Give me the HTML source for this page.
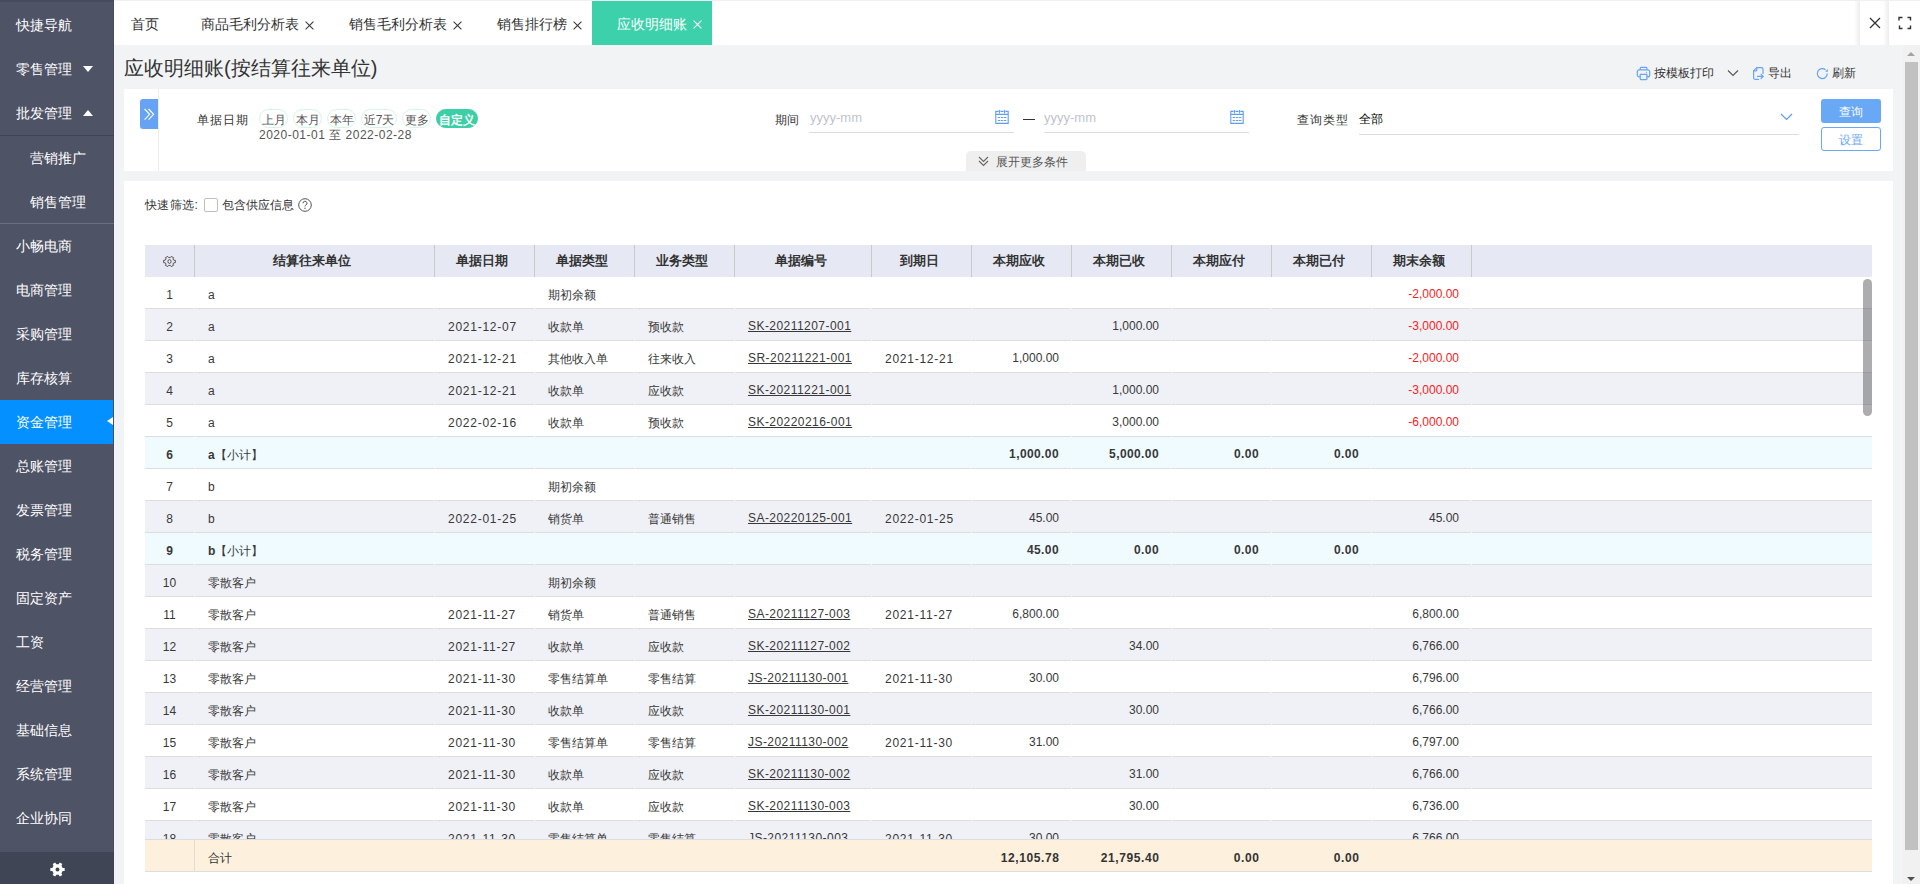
<!DOCTYPE html><html><head><meta charset="utf-8"><title>应收明细账</title><style>
*{box-sizing:border-box;margin:0;padding:0}
html,body{width:1920px;height:884px;overflow:hidden}
body{position:relative;background:#f2f3f5;font-family:"Liberation Sans",sans-serif;color:#333;font-size:12px}
.a{position:absolute;white-space:nowrap}
#sb{position:absolute;left:0;top:0;width:114px;height:884px;background:#4f5366}
.si{position:absolute;left:16px;color:#fff;font-size:14px;line-height:20px;height:20px;font-weight:500}
.ss{left:30px}
#tabs{position:absolute;left:114px;top:0;width:1806px;height:45px;background:#fff;border-top:1px solid #eef0f3}
.tb{position:absolute;top:0;height:45px;line-height:47px;font-size:14px;color:#333}
.x{display:inline-block;width:9px;height:9px;position:relative;margin-left:6px;vertical-align:-1px}
.x:before,.x:after{content:"";position:absolute;left:-1px;top:4px;width:11px;height:1px;background:#333;transform:rotate(45deg)}
.x:after{transform:rotate(-45deg)}
.xw:before,.xw:after{background:#fff}
.panel{position:absolute;background:#fff}
.tag{position:absolute;top:109px;height:19px;line-height:20px;border:1px solid #d6f3ea;border-radius:10px;font-size:12px;color:#555;text-align:center}
.ul{position:absolute;height:1px;background:#dcdcdc}
.hd{position:absolute;top:245px;height:32px;line-height:32px;font-size:13px;font-weight:bold;color:#333;text-align:center}
.vs{position:absolute;top:245px;width:1px;height:32px;background:#c9c9c9}
.row{position:absolute;left:0;width:1727px;height:32px;border-bottom:1px solid #dddddd}
.nt{position:absolute;bottom:-1px;width:1px;height:1px;background:#f8f8f8}
.c{position:absolute;top:3px;height:31px;line-height:31px;font-size:12px;color:#383838;white-space:nowrap}
.r{text-align:right}
.red{color:#f61c22}
.lk{text-decoration:underline;top:2px}
.b{font-weight:bold}
</style></head><body>
<div id="sb">
<div class="a" style="left:0;top:0;width:114px;height:2px;background:#474b5d"></div>
<div class="a" style="left:0;top:400px;width:113px;height:44px;background:#0590ff"></div>
<div class="a" style="left:107px;top:417px;width:0;height:0;border-top:4.5px solid transparent;border-bottom:4.5px solid transparent;border-right:6px solid #fff"></div>
<div class="a" style="left:113px;top:0;width:1px;height:852px;background:#484c5e"></div>
<div class="a" style="left:0;top:135px;width:114px;height:1px;background:#3f4354"></div>
<div class="a" style="left:0;top:223px;width:114px;height:1px;background:#6a6e80"></div>
<div class="si" style="top:15px">快捷导航</div>
<div class="si" style="top:59px">零售管理</div>
<div class="si" style="top:103px">批发管理</div>
<div class="si ss" style="top:148px">营销推广</div>
<div class="si ss" style="top:192px">销售管理</div>
<div class="si" style="top:236px">小畅电商</div>
<div class="si" style="top:280px">电商管理</div>
<div class="si" style="top:324px">采购管理</div>
<div class="si" style="top:368px">库存核算</div>
<div class="si" style="top:412px">资金管理</div>
<div class="si" style="top:456px">总账管理</div>
<div class="si" style="top:500px">发票管理</div>
<div class="si" style="top:544px">税务管理</div>
<div class="si" style="top:588px">固定资产</div>
<div class="si" style="top:632px">工资</div>
<div class="si" style="top:676px">经营管理</div>
<div class="si" style="top:720px">基础信息</div>
<div class="si" style="top:764px">系统管理</div>
<div class="si" style="top:808px">企业协同</div>
<div class="a" style="left:83px;top:66px;width:0;height:0;border-left:5px solid transparent;border-right:5px solid transparent;border-top:6px solid #fff"></div>
<div class="a" style="left:83px;top:110px;width:0;height:0;border-left:5px solid transparent;border-right:5px solid transparent;border-bottom:6px solid #fff"></div>
<div class="a" style="left:0;top:852px;width:114px;height:32px;background:#404555"></div>
<svg class="a" style="left:50px;top:862px" width="15" height="15" viewBox="0 0 15 15"><path fill="#fff" fill-rule="evenodd" d="M12.65 5.89L14.66 6.06L14.66 8.94L12.65 9.11L11.47 11.16L12.33 12.98L9.83 14.42L8.68 12.77L6.32 12.77L5.17 14.42L2.67 12.98L3.53 11.16L2.35 9.11L0.34 8.94L0.34 6.06L2.35 5.89L3.53 3.84L2.67 2.02L5.17 0.58L6.32 2.23L8.68 2.23L9.83 0.58L12.33 2.02L11.47 3.84Z M9.5 7.5A2 2 0 1 0 5.5 7.5A2 2 0 1 0 9.5 7.5Z"/></svg>
</div>
<div id="tabs">
<div class="tb" style="left:17px">首页</div>
<div class="tb" style="left:87px">商品毛利分析表<span class="x"></span></div>
<div class="tb" style="left:235px">销售毛利分析表<span class="x"></span></div>
<div class="tb" style="left:383px">销售排行榜<span class="x"></span></div>
<div class="tb" style="left:478px;width:120px;top:0px;height:44px;background:#3cd1ab;color:#fff;padding-left:25px">应收明细账<span class="x xw" style="margin-left:6px;vertical-align:0px"></span></div>
</div>
<div class="a" style="left:1854px;top:1px;width:6px;height:44px;background:linear-gradient(to right,rgba(0,0,0,0),rgba(0,0,0,0.07))"></div>
<div class="a" style="left:1860px;top:1px;width:29px;height:44px;background:#fff"></div>
<div class="a" style="left:1883px;top:1px;width:6px;height:44px;background:linear-gradient(to right,rgba(0,0,0,0),rgba(0,0,0,0.07))"></div>
<div class="a" style="left:1889px;top:1px;width:31px;height:44px;background:#fff"></div>
<svg class="a" style="left:1869px;top:17px" width="12" height="12" viewBox="0 0 12 12"><path d="M1 1L11 11M11 1L1 11" stroke="#333" stroke-width="1.3"/></svg>
<svg class="a" style="left:1898px;top:16px" width="14" height="14" viewBox="0 0 14 14"><path d="M1 4.5V1.5H4.5M9.5 1.5H12.5V4.5M12.5 9.5V12.5H9.5M4.5 12.5H1.5V9.5" fill="none" stroke="#333" stroke-width="1.4"/></svg>
<div class="a" style="left:124px;top:55px;font-size:20px;line-height:26px;color:#333">应收明细账(按结算往来单位)</div>
<svg class="a" style="left:1636px;top:66px" width="15" height="15" viewBox="0 0 15 15"><g fill="none" stroke="#67a4f6" stroke-width="1.2" stroke-linejoin="round"><path d="M4.2 3.8V2.2a.9.9 0 0 1 .9-.9h4.9a.9.9 0 0 1 .9.9v1.6"/><path d="M4.2 10.9H3.3a2 2 0 0 1-2-2V6a2 2 0 0 1 2-2.2h8.4a2 2 0 0 1 2 2.2v2.9a2 2 0 0 1-2 2h-.8"/><path d="M4.2 8.4h6.7v4.4a.9.9 0 0 1-.9.9H5.1a.9.9 0 0 1-.9-.9z"/></g><path d="M9.9 6.3h1.2" stroke="#67a4f6" stroke-width="1"/></svg>
<div class="a" style="left:1654px;top:66px;font-size:12px;line-height:15px">按模板打印</div>
<svg class="a" style="left:1727px;top:69px" width="12" height="8" viewBox="0 0 12 8"><path d="M1 1.5L6 6.5L11 1.5" fill="none" stroke="#555" stroke-width="1.1"/></svg>
<svg class="a" style="left:1752px;top:66px" width="14" height="15" viewBox="0 0 14 15"><g fill="none" stroke="#67a4f6" stroke-width="1.2" stroke-linejoin="round" stroke-linecap="round"><path d="M6.5 13.4H3.2a1.6 1.6 0 0 1-1.6-1.6V4.8L4.8 1.6H9.4a1.6 1.6 0 0 1 1.6 1.6V7.4"/><path d="M4.8 1.6V4a.8.8 0 0 1-.8.8H1.6"/><path d="M5.5 10.4H11.1M9.1 8.3L11.2 10.4 9.1 12.5"/></g></svg>
<div class="a" style="left:1768px;top:66px;font-size:12px;line-height:15px">导出</div>
<svg class="a" style="left:1816px;top:67px" width="13" height="13" viewBox="0 0 13 13"><path d="M11.3 6.6A5 5 0 1 1 9.6 2.8" fill="none" stroke="#67a4f6" stroke-width="1.2"/><path d="M11.9 2.1V4.7H9.1Z" fill="#67a4f6"/></svg>
<div class="a" style="left:1832px;top:66px;font-size:12px;line-height:15px">刷新</div>
<div class="panel" style="left:124px;top:89px;width:1769px;height:82px"></div>
<div class="a" style="left:158px;top:89px;width:1px;height:82px;background:#eeeeee"></div>
<div class="a" style="left:140px;top:99px;width:18px;height:30px;background:#66a3f4;border-radius:3px 0 0 3px"></div>
<svg class="a" style="left:143px;top:108px" width="14" height="13" viewBox="0 0 14 13"><path d="M1.6 1L6.6 6.3L1.6 11.6M5.6 1L10.6 6.3L5.6 11.6" fill="none" stroke="#fff" stroke-width="1.1"/></svg>
<div class="a" style="left:197px;top:112px;font-size:12px;line-height:16px;letter-spacing:0.9px;color:#333">单据日期</div>
<div class="tag" style="left:259px;width:29px">上月</div>
<div class="tag" style="left:293px;width:29px">本月</div>
<div class="tag" style="left:327px;width:29px">本年</div>
<div class="tag" style="left:361px;width:36px">近7天</div>
<div class="tag" style="left:402px;width:29px">更多</div>
<div class="tag" style="left:436px;width:42px;background:#3ccfa6;border-color:#3ccfa6;color:#fff;font-weight:bold">自定义</div>
<div class="a" style="left:259px;top:128px;font-size:12px;line-height:15px;color:#555;letter-spacing:0.5px">2020-01-01 至 2022-02-28</div>
<div class="a" style="left:775px;top:112px;font-size:12px;line-height:16px">期间</div>
<div class="a" style="left:810px;top:110px;font-size:13px;line-height:16px;color:#c0c4cc">yyyy-mm</div>
<div class="ul" style="left:809px;top:132px;width:205px"></div>
<svg class="a" style="left:995px;top:110px" width="14" height="14" viewBox="0 0 14 14"><g fill="none" stroke="#5f9df5" stroke-width="1.1"><path d="M3.6 1.4H.8v12h12.4v-12H10.4M5.4 1.4h3.2M.8 4.4h12.4"/><path d="M4.4 0v3M9.6 0v3" stroke-linecap="round"/><path d="M3.2 7.5h1.4M6.3 7.5h1.4M9.3 7.5h1.6M3.2 10.5h1.4M6.3 10.5h1.4M9.3 10.5h1.6" stroke-linecap="round" stroke-width="1.2"/></g></svg>
<div class="a" style="left:1023px;top:119px;width:12px;height:1px;background:#333"></div>
<div class="a" style="left:1044px;top:110px;font-size:13px;line-height:16px;color:#c0c4cc">yyyy-mm</div>
<div class="ul" style="left:1044px;top:132px;width:205px"></div>
<svg class="a" style="left:1230px;top:110px" width="14" height="14" viewBox="0 0 14 14"><g fill="none" stroke="#5f9df5" stroke-width="1.1"><path d="M3.6 1.4H.8v12h12.4v-12H10.4M5.4 1.4h3.2M.8 4.4h12.4"/><path d="M4.4 0v3M9.6 0v3" stroke-linecap="round"/><path d="M3.2 7.5h1.4M6.3 7.5h1.4M9.3 7.5h1.6M3.2 10.5h1.4M6.3 10.5h1.4M9.3 10.5h1.6" stroke-linecap="round" stroke-width="1.2"/></g></svg>
<div class="a" style="left:1297px;top:112px;font-size:12px;line-height:16px;letter-spacing:1px">查询类型</div>
<div class="a" style="left:1359px;top:111px;font-size:12px;line-height:16px;color:#000">全部</div>
<div class="ul" style="left:1359px;top:134px;width:440px"></div>
<svg class="a" style="left:1780px;top:113px" width="13" height="8" viewBox="0 0 13 8"><path d="M1 1L6.5 6.5L12 1" fill="none" stroke="#5b9cf6" stroke-width="1.2"/></svg>
<div class="a" style="left:1821px;top:99px;width:60px;height:24px;background:#69a8f5;border-radius:3px;color:#fff;font-size:12px;line-height:27px;text-align:center">查询</div>
<div class="a" style="left:1821px;top:127px;width:60px;height:24px;background:#fff;border:1px solid #69a8f5;border-radius:3px;color:#69a8f5;font-size:12px;line-height:25px;text-align:center">设置</div>
<div class="a" style="left:966px;top:151px;width:120px;height:20px;background:#efefef;border-radius:5px 5px 0 0"></div>
<svg class="a" style="left:978px;top:156px" width="11" height="11" viewBox="0 0 11 11"><path d="M1 1L5.5 5.5L10 1M1 5L5.5 9.5L10 5" fill="none" stroke="#666" stroke-width="1.1"/></svg>
<div class="a" style="left:996px;top:154px;font-size:12px;line-height:16px;color:#555">展开更多条件</div>
<div class="panel" style="left:124px;top:181px;width:1769px;height:703px"></div>
<div class="a" style="left:145px;top:197px;font-size:12px;line-height:16px;letter-spacing:0.4px">快速筛选:</div>
<div class="a" style="left:204px;top:198px;width:14px;height:14px;border:1px solid #bfbfbf;border-radius:2px;background:#fff"></div>
<div class="a" style="left:222px;top:197px;font-size:12px;line-height:16px">包含供应信息</div>
<svg class="a" style="left:298px;top:198px" width="14" height="14" viewBox="0 0 14 14"><circle cx="7" cy="7" r="6.3" fill="none" stroke="#555" stroke-width="1"/><path d="M5 5.3a2 2 0 1 1 2.8 1.8c-.6.3-.8.6-.8 1.3" fill="none" stroke="#555" stroke-width="1"/><circle cx="7" cy="10.3" r=".7" fill="#555"/></svg>
<div class="a" style="left:145px;top:245px;width:1727px;height:32px;background:#e6e9f3"></div>
<div class="hd" style="left:192px;width:240px">结算往来单位</div>
<div class="hd" style="left:432px;width:100px">单据日期</div>
<div class="hd" style="left:532px;width:100px">单据类型</div>
<div class="hd" style="left:632px;width:100px">业务类型</div>
<div class="hd" style="left:732px;width:137px">单据编号</div>
<div class="hd" style="left:869px;width:100px">到期日</div>
<div class="hd" style="left:969px;width:100px">本期应收</div>
<div class="hd" style="left:1069px;width:100px">本期已收</div>
<div class="hd" style="left:1169px;width:100px">本期应付</div>
<div class="hd" style="left:1269px;width:100px">本期已付</div>
<div class="hd" style="left:1369px;width:100px">期末余额</div>
<div class="vs" style="left:194px"></div>
<div class="vs" style="left:434px"></div>
<div class="vs" style="left:534px"></div>
<div class="vs" style="left:634px"></div>
<div class="vs" style="left:734px"></div>
<div class="vs" style="left:871px"></div>
<div class="vs" style="left:971px"></div>
<div class="vs" style="left:1071px"></div>
<div class="vs" style="left:1171px"></div>
<div class="vs" style="left:1271px"></div>
<div class="vs" style="left:1371px"></div>
<div class="vs" style="left:1471px"></div>
<svg class="a" style="left:163px;top:256px" width="13" height="11" viewBox="0 0 13 11"><path fill="none" stroke="#555" stroke-width="1" stroke-linejoin="round" d="M10.74 4.18L12.33 4.27L12.33 6.73L10.74 6.82L9.92 8.07L10.63 9.33L8.20 10.56L7.32 9.39L5.68 9.39L4.80 10.56L2.37 9.33L3.08 8.07L2.26 6.82L0.67 6.73L0.67 4.27L2.26 4.18L3.08 2.93L2.37 1.67L4.80 0.44L5.68 1.61L7.32 1.61L8.20 0.44L10.63 1.67L9.92 2.93Z"/><ellipse cx="6.5" cy="5.5" rx="1.6" ry="1.9" fill="none" stroke="#555" stroke-width="1"/></svg>
<div class="a" style="left:145px;top:277px;width:1727px;height:562px;overflow:hidden">
<div class="row" style="top:0px;background:#ffffff">
<div class="c" style="left:0px;width:49px;text-align:center">1</div>
<div class="c" style="left:63px">a</div>
<div class="c" style="left:403px">期初余额</div>
<div class="c r red" style="left:1226px;width:88px;top:2px">-2,000.00</div>
<i class="nt" style="left:49px"></i>
<i class="nt" style="left:289px"></i>
<i class="nt" style="left:389px"></i>
<i class="nt" style="left:489px"></i>
<i class="nt" style="left:589px"></i>
<i class="nt" style="left:726px"></i>
<i class="nt" style="left:826px"></i>
<i class="nt" style="left:926px"></i>
<i class="nt" style="left:1026px"></i>
<i class="nt" style="left:1126px"></i>
<i class="nt" style="left:1226px"></i>
<i class="nt" style="left:1326px"></i>
</div>
<div class="row" style="top:32px;background:#f0f1f6">
<div class="c" style="left:0px;width:49px;text-align:center">2</div>
<div class="c" style="left:63px">a</div>
<div class="c" style="left:303px;letter-spacing:0.75px">2021-12-07</div>
<div class="c" style="left:403px">收款单</div>
<div class="c" style="left:503px">预收款</div>
<div class="c lk" style="left:603px;letter-spacing:0.45px;top:2px">SK-20211207-001</div>
<div class="c r" style="left:926px;width:88px;top:2px">1,000.00</div>
<div class="c r red" style="left:1226px;width:88px;top:2px">-3,000.00</div>
<i class="nt" style="left:49px"></i>
<i class="nt" style="left:289px"></i>
<i class="nt" style="left:389px"></i>
<i class="nt" style="left:489px"></i>
<i class="nt" style="left:589px"></i>
<i class="nt" style="left:726px"></i>
<i class="nt" style="left:826px"></i>
<i class="nt" style="left:926px"></i>
<i class="nt" style="left:1026px"></i>
<i class="nt" style="left:1126px"></i>
<i class="nt" style="left:1226px"></i>
<i class="nt" style="left:1326px"></i>
</div>
<div class="row" style="top:64px;background:#ffffff">
<div class="c" style="left:0px;width:49px;text-align:center">3</div>
<div class="c" style="left:63px">a</div>
<div class="c" style="left:303px;letter-spacing:0.75px">2021-12-21</div>
<div class="c" style="left:403px">其他收入单</div>
<div class="c" style="left:503px">往来收入</div>
<div class="c lk" style="left:603px;letter-spacing:0.45px;top:2px">SR-20211221-001</div>
<div class="c" style="left:740px;letter-spacing:0.75px">2021-12-21</div>
<div class="c r" style="left:826px;width:88px;top:2px">1,000.00</div>
<div class="c r red" style="left:1226px;width:88px;top:2px">-2,000.00</div>
<i class="nt" style="left:49px"></i>
<i class="nt" style="left:289px"></i>
<i class="nt" style="left:389px"></i>
<i class="nt" style="left:489px"></i>
<i class="nt" style="left:589px"></i>
<i class="nt" style="left:726px"></i>
<i class="nt" style="left:826px"></i>
<i class="nt" style="left:926px"></i>
<i class="nt" style="left:1026px"></i>
<i class="nt" style="left:1126px"></i>
<i class="nt" style="left:1226px"></i>
<i class="nt" style="left:1326px"></i>
</div>
<div class="row" style="top:96px;background:#f0f1f6">
<div class="c" style="left:0px;width:49px;text-align:center">4</div>
<div class="c" style="left:63px">a</div>
<div class="c" style="left:303px;letter-spacing:0.75px">2021-12-21</div>
<div class="c" style="left:403px">收款单</div>
<div class="c" style="left:503px">应收款</div>
<div class="c lk" style="left:603px;letter-spacing:0.45px;top:2px">SK-20211221-001</div>
<div class="c r" style="left:926px;width:88px;top:2px">1,000.00</div>
<div class="c r red" style="left:1226px;width:88px;top:2px">-3,000.00</div>
<i class="nt" style="left:49px"></i>
<i class="nt" style="left:289px"></i>
<i class="nt" style="left:389px"></i>
<i class="nt" style="left:489px"></i>
<i class="nt" style="left:589px"></i>
<i class="nt" style="left:726px"></i>
<i class="nt" style="left:826px"></i>
<i class="nt" style="left:926px"></i>
<i class="nt" style="left:1026px"></i>
<i class="nt" style="left:1126px"></i>
<i class="nt" style="left:1226px"></i>
<i class="nt" style="left:1326px"></i>
</div>
<div class="row" style="top:128px;background:#ffffff">
<div class="c" style="left:0px;width:49px;text-align:center">5</div>
<div class="c" style="left:63px">a</div>
<div class="c" style="left:303px;letter-spacing:0.75px">2022-02-16</div>
<div class="c" style="left:403px">收款单</div>
<div class="c" style="left:503px">预收款</div>
<div class="c lk" style="left:603px;letter-spacing:0.45px;top:2px">SK-20220216-001</div>
<div class="c r" style="left:926px;width:88px;top:2px">3,000.00</div>
<div class="c r red" style="left:1226px;width:88px;top:2px">-6,000.00</div>
<i class="nt" style="left:49px"></i>
<i class="nt" style="left:289px"></i>
<i class="nt" style="left:389px"></i>
<i class="nt" style="left:489px"></i>
<i class="nt" style="left:589px"></i>
<i class="nt" style="left:726px"></i>
<i class="nt" style="left:826px"></i>
<i class="nt" style="left:926px"></i>
<i class="nt" style="left:1026px"></i>
<i class="nt" style="left:1126px"></i>
<i class="nt" style="left:1226px"></i>
<i class="nt" style="left:1326px"></i>
</div>
<div class="row" style="top:160px;background:#effbfe">
<div class="c b" style="left:0px;width:49px;text-align:center">6</div>
<div class="c b" style="left:63px">a<span style="font-weight:500">【小计】</span></div>
<div class="c r b" style="left:826px;width:88px;top:2px;letter-spacing:0.4px;padding-right:0px">1,000.00</div>
<div class="c r b" style="left:926px;width:88px;top:2px;letter-spacing:0.4px;padding-right:0px">5,000.00</div>
<div class="c r b" style="left:1026px;width:88px;top:2px;letter-spacing:0.4px;padding-right:0px">0.00</div>
<div class="c r b" style="left:1126px;width:88px;top:2px;letter-spacing:0.4px;padding-right:0px">0.00</div>
<i class="nt" style="left:49px"></i>
<i class="nt" style="left:289px"></i>
<i class="nt" style="left:389px"></i>
<i class="nt" style="left:489px"></i>
<i class="nt" style="left:589px"></i>
<i class="nt" style="left:726px"></i>
<i class="nt" style="left:826px"></i>
<i class="nt" style="left:926px"></i>
<i class="nt" style="left:1026px"></i>
<i class="nt" style="left:1126px"></i>
<i class="nt" style="left:1226px"></i>
<i class="nt" style="left:1326px"></i>
</div>
<div class="row" style="top:192px;background:#ffffff">
<div class="c" style="left:0px;width:49px;text-align:center">7</div>
<div class="c" style="left:63px">b</div>
<div class="c" style="left:403px">期初余额</div>
<i class="nt" style="left:49px"></i>
<i class="nt" style="left:289px"></i>
<i class="nt" style="left:389px"></i>
<i class="nt" style="left:489px"></i>
<i class="nt" style="left:589px"></i>
<i class="nt" style="left:726px"></i>
<i class="nt" style="left:826px"></i>
<i class="nt" style="left:926px"></i>
<i class="nt" style="left:1026px"></i>
<i class="nt" style="left:1126px"></i>
<i class="nt" style="left:1226px"></i>
<i class="nt" style="left:1326px"></i>
</div>
<div class="row" style="top:224px;background:#f0f1f6">
<div class="c" style="left:0px;width:49px;text-align:center">8</div>
<div class="c" style="left:63px">b</div>
<div class="c" style="left:303px;letter-spacing:0.75px">2022-01-25</div>
<div class="c" style="left:403px">销货单</div>
<div class="c" style="left:503px">普通销售</div>
<div class="c lk" style="left:603px;letter-spacing:0.45px;top:2px">SA-20220125-001</div>
<div class="c" style="left:740px;letter-spacing:0.75px">2022-01-25</div>
<div class="c r" style="left:826px;width:88px;top:2px">45.00</div>
<div class="c r" style="left:1226px;width:88px;top:2px">45.00</div>
<i class="nt" style="left:49px"></i>
<i class="nt" style="left:289px"></i>
<i class="nt" style="left:389px"></i>
<i class="nt" style="left:489px"></i>
<i class="nt" style="left:589px"></i>
<i class="nt" style="left:726px"></i>
<i class="nt" style="left:826px"></i>
<i class="nt" style="left:926px"></i>
<i class="nt" style="left:1026px"></i>
<i class="nt" style="left:1126px"></i>
<i class="nt" style="left:1226px"></i>
<i class="nt" style="left:1326px"></i>
</div>
<div class="row" style="top:256px;background:#effbfe">
<div class="c b" style="left:0px;width:49px;text-align:center">9</div>
<div class="c b" style="left:63px">b<span style="font-weight:500">【小计】</span></div>
<div class="c r b" style="left:826px;width:88px;top:2px;letter-spacing:0.4px;padding-right:0px">45.00</div>
<div class="c r b" style="left:926px;width:88px;top:2px;letter-spacing:0.4px;padding-right:0px">0.00</div>
<div class="c r b" style="left:1026px;width:88px;top:2px;letter-spacing:0.4px;padding-right:0px">0.00</div>
<div class="c r b" style="left:1126px;width:88px;top:2px;letter-spacing:0.4px;padding-right:0px">0.00</div>
<i class="nt" style="left:49px"></i>
<i class="nt" style="left:289px"></i>
<i class="nt" style="left:389px"></i>
<i class="nt" style="left:489px"></i>
<i class="nt" style="left:589px"></i>
<i class="nt" style="left:726px"></i>
<i class="nt" style="left:826px"></i>
<i class="nt" style="left:926px"></i>
<i class="nt" style="left:1026px"></i>
<i class="nt" style="left:1126px"></i>
<i class="nt" style="left:1226px"></i>
<i class="nt" style="left:1326px"></i>
</div>
<div class="row" style="top:288px;background:#f0f1f6">
<div class="c" style="left:0px;width:49px;text-align:center">10</div>
<div class="c" style="left:63px">零散客户</div>
<div class="c" style="left:403px">期初余额</div>
<i class="nt" style="left:49px"></i>
<i class="nt" style="left:289px"></i>
<i class="nt" style="left:389px"></i>
<i class="nt" style="left:489px"></i>
<i class="nt" style="left:589px"></i>
<i class="nt" style="left:726px"></i>
<i class="nt" style="left:826px"></i>
<i class="nt" style="left:926px"></i>
<i class="nt" style="left:1026px"></i>
<i class="nt" style="left:1126px"></i>
<i class="nt" style="left:1226px"></i>
<i class="nt" style="left:1326px"></i>
</div>
<div class="row" style="top:320px;background:#ffffff">
<div class="c" style="left:0px;width:49px;text-align:center">11</div>
<div class="c" style="left:63px">零散客户</div>
<div class="c" style="left:303px;letter-spacing:0.75px">2021-11-27</div>
<div class="c" style="left:403px">销货单</div>
<div class="c" style="left:503px">普通销售</div>
<div class="c lk" style="left:603px;letter-spacing:0.45px;top:2px">SA-20211127-003</div>
<div class="c" style="left:740px;letter-spacing:0.75px">2021-11-27</div>
<div class="c r" style="left:826px;width:88px;top:2px">6,800.00</div>
<div class="c r" style="left:1226px;width:88px;top:2px">6,800.00</div>
<i class="nt" style="left:49px"></i>
<i class="nt" style="left:289px"></i>
<i class="nt" style="left:389px"></i>
<i class="nt" style="left:489px"></i>
<i class="nt" style="left:589px"></i>
<i class="nt" style="left:726px"></i>
<i class="nt" style="left:826px"></i>
<i class="nt" style="left:926px"></i>
<i class="nt" style="left:1026px"></i>
<i class="nt" style="left:1126px"></i>
<i class="nt" style="left:1226px"></i>
<i class="nt" style="left:1326px"></i>
</div>
<div class="row" style="top:352px;background:#f0f1f6">
<div class="c" style="left:0px;width:49px;text-align:center">12</div>
<div class="c" style="left:63px">零散客户</div>
<div class="c" style="left:303px;letter-spacing:0.75px">2021-11-27</div>
<div class="c" style="left:403px">收款单</div>
<div class="c" style="left:503px">应收款</div>
<div class="c lk" style="left:603px;letter-spacing:0.45px;top:2px">SK-20211127-002</div>
<div class="c r" style="left:926px;width:88px;top:2px">34.00</div>
<div class="c r" style="left:1226px;width:88px;top:2px">6,766.00</div>
<i class="nt" style="left:49px"></i>
<i class="nt" style="left:289px"></i>
<i class="nt" style="left:389px"></i>
<i class="nt" style="left:489px"></i>
<i class="nt" style="left:589px"></i>
<i class="nt" style="left:726px"></i>
<i class="nt" style="left:826px"></i>
<i class="nt" style="left:926px"></i>
<i class="nt" style="left:1026px"></i>
<i class="nt" style="left:1126px"></i>
<i class="nt" style="left:1226px"></i>
<i class="nt" style="left:1326px"></i>
</div>
<div class="row" style="top:384px;background:#ffffff">
<div class="c" style="left:0px;width:49px;text-align:center">13</div>
<div class="c" style="left:63px">零散客户</div>
<div class="c" style="left:303px;letter-spacing:0.75px">2021-11-30</div>
<div class="c" style="left:403px">零售结算单</div>
<div class="c" style="left:503px">零售结算</div>
<div class="c lk" style="left:603px;letter-spacing:0.45px;top:2px">JS-20211130-001</div>
<div class="c" style="left:740px;letter-spacing:0.75px">2021-11-30</div>
<div class="c r" style="left:826px;width:88px;top:2px">30.00</div>
<div class="c r" style="left:1226px;width:88px;top:2px">6,796.00</div>
<i class="nt" style="left:49px"></i>
<i class="nt" style="left:289px"></i>
<i class="nt" style="left:389px"></i>
<i class="nt" style="left:489px"></i>
<i class="nt" style="left:589px"></i>
<i class="nt" style="left:726px"></i>
<i class="nt" style="left:826px"></i>
<i class="nt" style="left:926px"></i>
<i class="nt" style="left:1026px"></i>
<i class="nt" style="left:1126px"></i>
<i class="nt" style="left:1226px"></i>
<i class="nt" style="left:1326px"></i>
</div>
<div class="row" style="top:416px;background:#f0f1f6">
<div class="c" style="left:0px;width:49px;text-align:center">14</div>
<div class="c" style="left:63px">零散客户</div>
<div class="c" style="left:303px;letter-spacing:0.75px">2021-11-30</div>
<div class="c" style="left:403px">收款单</div>
<div class="c" style="left:503px">应收款</div>
<div class="c lk" style="left:603px;letter-spacing:0.45px;top:2px">SK-20211130-001</div>
<div class="c r" style="left:926px;width:88px;top:2px">30.00</div>
<div class="c r" style="left:1226px;width:88px;top:2px">6,766.00</div>
<i class="nt" style="left:49px"></i>
<i class="nt" style="left:289px"></i>
<i class="nt" style="left:389px"></i>
<i class="nt" style="left:489px"></i>
<i class="nt" style="left:589px"></i>
<i class="nt" style="left:726px"></i>
<i class="nt" style="left:826px"></i>
<i class="nt" style="left:926px"></i>
<i class="nt" style="left:1026px"></i>
<i class="nt" style="left:1126px"></i>
<i class="nt" style="left:1226px"></i>
<i class="nt" style="left:1326px"></i>
</div>
<div class="row" style="top:448px;background:#ffffff">
<div class="c" style="left:0px;width:49px;text-align:center">15</div>
<div class="c" style="left:63px">零散客户</div>
<div class="c" style="left:303px;letter-spacing:0.75px">2021-11-30</div>
<div class="c" style="left:403px">零售结算单</div>
<div class="c" style="left:503px">零售结算</div>
<div class="c lk" style="left:603px;letter-spacing:0.45px;top:2px">JS-20211130-002</div>
<div class="c" style="left:740px;letter-spacing:0.75px">2021-11-30</div>
<div class="c r" style="left:826px;width:88px;top:2px">31.00</div>
<div class="c r" style="left:1226px;width:88px;top:2px">6,797.00</div>
<i class="nt" style="left:49px"></i>
<i class="nt" style="left:289px"></i>
<i class="nt" style="left:389px"></i>
<i class="nt" style="left:489px"></i>
<i class="nt" style="left:589px"></i>
<i class="nt" style="left:726px"></i>
<i class="nt" style="left:826px"></i>
<i class="nt" style="left:926px"></i>
<i class="nt" style="left:1026px"></i>
<i class="nt" style="left:1126px"></i>
<i class="nt" style="left:1226px"></i>
<i class="nt" style="left:1326px"></i>
</div>
<div class="row" style="top:480px;background:#f0f1f6">
<div class="c" style="left:0px;width:49px;text-align:center">16</div>
<div class="c" style="left:63px">零散客户</div>
<div class="c" style="left:303px;letter-spacing:0.75px">2021-11-30</div>
<div class="c" style="left:403px">收款单</div>
<div class="c" style="left:503px">应收款</div>
<div class="c lk" style="left:603px;letter-spacing:0.45px;top:2px">SK-20211130-002</div>
<div class="c r" style="left:926px;width:88px;top:2px">31.00</div>
<div class="c r" style="left:1226px;width:88px;top:2px">6,766.00</div>
<i class="nt" style="left:49px"></i>
<i class="nt" style="left:289px"></i>
<i class="nt" style="left:389px"></i>
<i class="nt" style="left:489px"></i>
<i class="nt" style="left:589px"></i>
<i class="nt" style="left:726px"></i>
<i class="nt" style="left:826px"></i>
<i class="nt" style="left:926px"></i>
<i class="nt" style="left:1026px"></i>
<i class="nt" style="left:1126px"></i>
<i class="nt" style="left:1226px"></i>
<i class="nt" style="left:1326px"></i>
</div>
<div class="row" style="top:512px;background:#ffffff">
<div class="c" style="left:0px;width:49px;text-align:center">17</div>
<div class="c" style="left:63px">零散客户</div>
<div class="c" style="left:303px;letter-spacing:0.75px">2021-11-30</div>
<div class="c" style="left:403px">收款单</div>
<div class="c" style="left:503px">应收款</div>
<div class="c lk" style="left:603px;letter-spacing:0.45px;top:2px">SK-20211130-003</div>
<div class="c r" style="left:926px;width:88px;top:2px">30.00</div>
<div class="c r" style="left:1226px;width:88px;top:2px">6,736.00</div>
<i class="nt" style="left:49px"></i>
<i class="nt" style="left:289px"></i>
<i class="nt" style="left:389px"></i>
<i class="nt" style="left:489px"></i>
<i class="nt" style="left:589px"></i>
<i class="nt" style="left:726px"></i>
<i class="nt" style="left:826px"></i>
<i class="nt" style="left:926px"></i>
<i class="nt" style="left:1026px"></i>
<i class="nt" style="left:1126px"></i>
<i class="nt" style="left:1226px"></i>
<i class="nt" style="left:1326px"></i>
</div>
<div class="row" style="top:544px;background:#f0f1f6">
<div class="c" style="left:0px;width:49px;text-align:center">18</div>
<div class="c" style="left:63px">零散客户</div>
<div class="c" style="left:303px;letter-spacing:0.75px">2021-11-30</div>
<div class="c" style="left:403px">零售结算单</div>
<div class="c" style="left:503px">零售结算</div>
<div class="c lk" style="left:603px;letter-spacing:0.45px;top:2px">JS-20211130-003</div>
<div class="c" style="left:740px;letter-spacing:0.75px">2021-11-30</div>
<div class="c r" style="left:826px;width:88px;top:2px">30.00</div>
<div class="c r" style="left:1226px;width:88px;top:2px">6,766.00</div>
<i class="nt" style="left:49px"></i>
<i class="nt" style="left:289px"></i>
<i class="nt" style="left:389px"></i>
<i class="nt" style="left:489px"></i>
<i class="nt" style="left:589px"></i>
<i class="nt" style="left:726px"></i>
<i class="nt" style="left:826px"></i>
<i class="nt" style="left:926px"></i>
<i class="nt" style="left:1026px"></i>
<i class="nt" style="left:1126px"></i>
<i class="nt" style="left:1226px"></i>
<i class="nt" style="left:1326px"></i>
</div>
<div class="a" style="left:1718px;top:2px;width:9px;height:137px;background:rgba(80,80,84,0.47);border-radius:5px"></div>
</div>
<div class="a" style="left:145px;top:839px;width:1727px;height:33px;background:#fdf0dc;border-top:1px solid #dcdde2;border-bottom:1px solid #dcdde2"></div>
<div class="a" style="left:194px;top:840px;width:1px;height:31px;background:#e3dccf"></div>
<div class="a" style="left:208px;top:850px;font-size:12px;line-height:16px">合计</div>
<div class="a b" style="left:971px;width:88.6px;top:850px;font-size:12px;line-height:16px;text-align:right;letter-spacing:0.6px">12,105.78</div>
<div class="a b" style="left:1071px;width:88.6px;top:850px;font-size:12px;line-height:16px;text-align:right;letter-spacing:0.6px">21,795.40</div>
<div class="a b" style="left:1171px;width:88.6px;top:850px;font-size:12px;line-height:16px;text-align:right;letter-spacing:0.6px">0.00</div>
<div class="a b" style="left:1271px;width:88.6px;top:850px;font-size:12px;line-height:16px;text-align:right;letter-spacing:0.6px">0.00</div>
<div class="a" style="left:1903px;top:45px;width:17px;height:839px;background:#f1f1f1"></div>
<div class="a" style="left:1905px;top:62px;width:13px;height:788px;background:#c1c1c1"></div>
<div class="a" style="left:1907px;top:52px;width:0;height:0;border-left:4px solid transparent;border-right:4px solid transparent;border-bottom:4px solid #a3a3a3"></div>
<div class="a" style="left:1907px;top:877px;width:0;height:0;border-left:4px solid transparent;border-right:4px solid transparent;border-top:4px solid #505050"></div>
</body></html>
